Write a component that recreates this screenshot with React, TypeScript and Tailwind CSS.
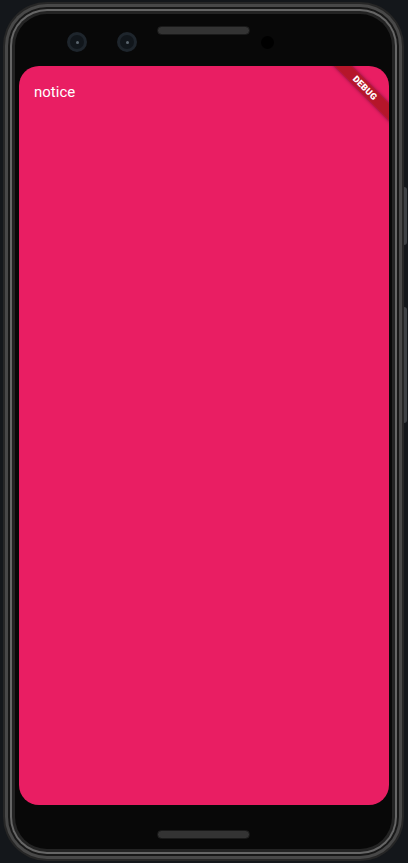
import React from "react"

const speaker =
  "h-[9px] w-[93px] rounded-full bg-[#1f1f1f] bg-[radial-gradient(#333333_0.8px,transparent_0.9px)] bg-[length:2px_2px] border border-[#1a1a1a]"

function Camera() {
  return (
    <div className="flex h-[20px] w-[20px] items-center justify-center rounded-full bg-[#1e252c]">
      <div className="flex h-[14px] w-[14px] items-center justify-center rounded-full bg-[#11161b]">
        <div className="h-[3px] w-[3px] rounded-full bg-[#5d6770]" />
      </div>
    </div>
  )
}

function DebugBanner() {
  return (
    <div className="absolute left-[291px] top-[16px] flex h-[12px] w-[110px] rotate-45 items-center justify-center bg-[#a8141c]/80 shadow-[0_0_4px_rgba(0,0,0,0.5)]">
      <span className="text-[9px] font-black leading-none tracking-[0.2px] text-white">DEBUG</span>
    </div>
  )
}

export default function App() {
  return (
    <div className="relative h-[863px] w-[408px] overflow-hidden bg-[#14171b] pl-[3px] pt-[2px] font-['Roboto',sans-serif]">
      {/* side buttons */}
      <div className="absolute left-[404px] top-[187px] h-[58px] w-[3px] rounded-r-sm bg-[#3e4145]" />
      <div className="absolute left-[404px] top-[307px] h-[116px] w-[3px] rounded-r-sm bg-[#3e4145]" />

      {/* phone body rings */}
      <div className="h-[859px] w-[401px] rounded-[44px] bg-[#262626] p-[2px]">
        <div className="h-full w-full rounded-[42px] bg-[#484848] p-[3px]">
          <div className="h-full w-full rounded-[39px] bg-[#181818] p-[2px]">
            <div className="h-full w-full rounded-[37px] bg-[#666666] p-[2px]">
              <div className="h-full w-full rounded-[35px] bg-[#232323] p-[3px]">
                <div className="flex h-full w-full flex-col rounded-[32px] bg-[#080808]">
                  {/* top bezel */}
                  <div className="flex h-[52px] items-start">
                    <div className="ml-[52px] mt-[18px]">
                      <Camera />
                    </div>
                    <div className="ml-[30px] mt-[18px]">
                      <Camera />
                    </div>
                    <div className={`ml-[20px] mt-[12px] ${speaker}`} />
                    <div className="ml-[11px] mt-[22px] h-[13px] w-[13px] rounded-full bg-black" />
                  </div>

                  {/* screen */}
                  <div className="relative ml-[4px] h-[739px] w-[370px] overflow-hidden rounded-[20px] bg-[#e91e63] pl-[15px] pt-[17px]">
                    <p className="text-[15px] leading-[18px] text-white">notice</p>
                    <DebugBanner />
                  </div>

                  {/* bottom bezel */}
                  <div className="flex justify-center pt-[25px]">
                    <div className={speaker} />
                  </div>
                </div>
              </div>
            </div>
          </div>
        </div>
      </div>
    </div>
  )
}
